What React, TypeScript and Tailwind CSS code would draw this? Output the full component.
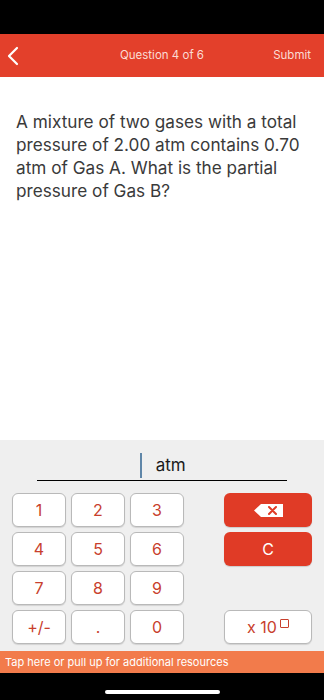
import React from "react";

const font = { fontFamily: "Inter, 'Liberation Sans', sans-serif" };

function Key({ label }: { label: string }) {
  return (
    <div className="h-[34px] rounded-[6px] border border-[#b9b9b9] bg-white shadow-[0_1px_1px_rgba(0,0,0,0.12)] flex items-center justify-center text-[16px] text-[#c8402d]">
      {label}
    </div>
  );
}

export default function App() {
  const keys = ["1", "2", "3", "4", "5", "6", "7", "8", "9", "+/-", ".", "0"];

  return (
    <div className="w-[324px] h-[700px] flex flex-col bg-white overflow-hidden" style={font}>
      {/* status bar */}
      <div className="h-[34px] bg-black" />

      {/* header */}
      <div className="h-[43px] bg-[#e3402b] grid grid-cols-[1fr_auto_1fr] items-center px-[6px]">
        <svg width="14" height="20" viewBox="0 0 14 20">
          <path d="M11 2 L3 10 L11 18" fill="none" stroke="white" strokeWidth="2.2" strokeLinecap="round" strokeLinejoin="round" />
        </svg>
        <div className="text-[11.5px] text-[#fbdcd5]">Question 4 of 6</div>
        <div className="text-right text-[11.5px] text-[#fbdcd5] pr-[7px]">Submit</div>
      </div>

      {/* question */}
      <div className="flex-1 px-[16px] pt-[33px]">
        <p className="text-[17.2px] leading-[23px] text-[#3a3a3a]">
          A mixture of two gases with a total pressure of 2.00 atm contains 0.70 atm of Gas A. What is the partial pressure of Gas B?
        </p>
      </div>

      {/* keypad */}
      <div className="h-[211px] bg-[#efefef] flex flex-col">
        <div className="h-[41px] mx-[37px] border-b border-black flex items-end justify-center pb-[2px]">
          <div className="flex items-center gap-[14px] pl-[2px]">
            <div className="w-[1.5px] h-[25px] bg-[#5f86a8]" />
            <span className="text-[17px] text-[#1a1a1a] leading-[25px]">atm</span>
          </div>
        </div>

        <div className="flex mt-[12px] px-[12px]">
          <div className="grid grid-cols-[54px_54px_54px] gap-x-[5px] gap-y-[5px]">
            {keys.map((k) => (
              <Key key={k} label={k} />
            ))}
          </div>

          <div className="ml-[40px] w-[89px] flex flex-col gap-[5px]">
            <div className="h-[34px] rounded-[6px] bg-[#e03b26] shadow-[0_1px_1px_rgba(0,0,0,0.15)] flex items-center justify-center">
              <svg width="29" height="13" viewBox="0 0 29 13">
                <path d="M0 6.5 L7 0 H29 V13 H7 Z" fill="white" />
                <path d="M15 3 L22 10 M22 3 L15 10" stroke="#e03b26" strokeWidth="2" strokeLinecap="round" />
              </svg>
            </div>
            <div className="h-[34px] rounded-[6px] bg-[#e03b26] shadow-[0_1px_1px_rgba(0,0,0,0.15)] flex items-center justify-center text-[16px] text-white">
              C
            </div>
            <div className="h-[34px]" />
            <div className="h-[34px] rounded-[6px] border border-[#b9b9b9] bg-white shadow-[0_1px_1px_rgba(0,0,0,0.12)] flex items-center justify-center text-[16px] text-[#c8402d]">
              <span>x 10</span>
              <span className="inline-block w-[9px] h-[9px] border border-[#c8402d] rounded-[1px] ml-[3px] -translate-y-[4px]" />
            </div>
          </div>
        </div>
      </div>

      {/* resources bar */}
      <div className="h-[22px] bg-[#f27b4b] flex items-center px-[5px] text-[11px] text-white">
        Tap here or pull up for additional resources
      </div>

      {/* home indicator */}
      <div className="h-[27px] bg-black flex items-center justify-center pt-[10px]">
        <div className="w-[115px] h-[4px] rounded-full bg-white" />
      </div>
    </div>
  );
}
